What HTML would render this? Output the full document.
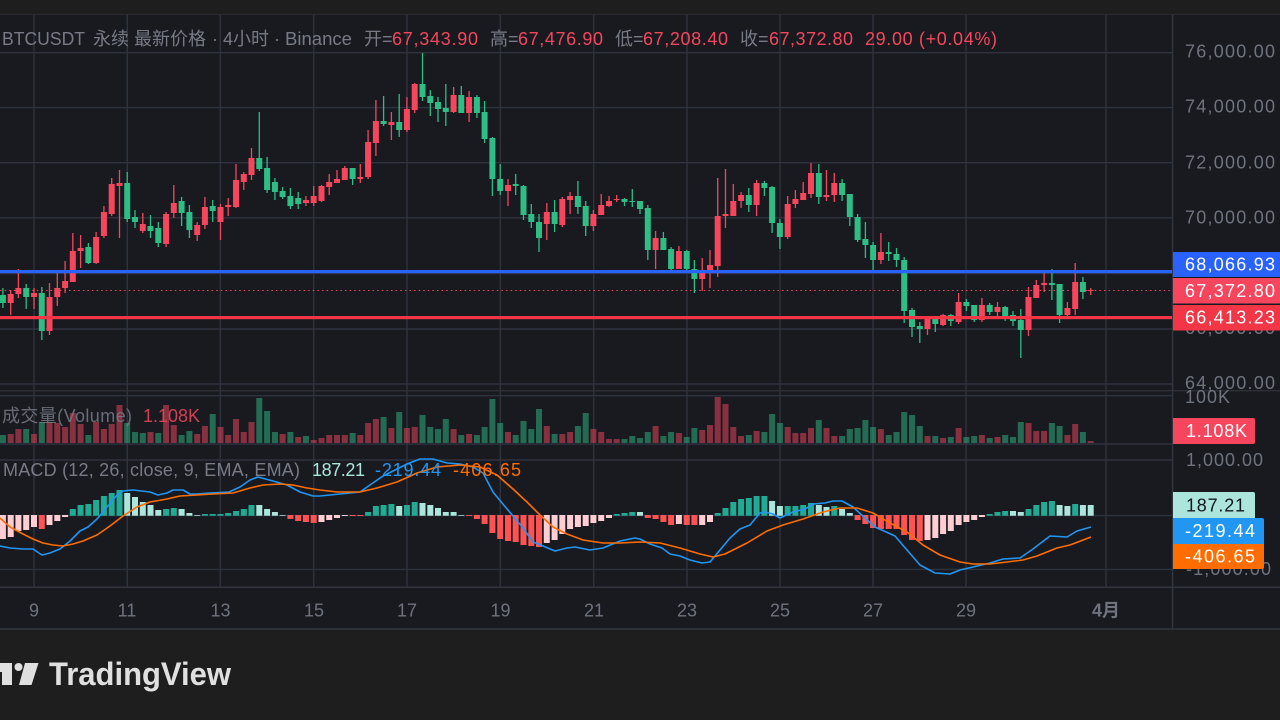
<!DOCTYPE html>
<html lang="zh">
<head>
<meta charset="utf-8">
<title>BTCUSDT Chart</title>
<style>
html,body{margin:0;padding:0;width:1280px;height:720px;overflow:hidden;background:#1e1e1e}
svg{display:block;position:absolute;left:0;top:0}
text{font-family:"Liberation Sans","Noto Sans CJK SC",sans-serif}
</style>
</head>
<body>
<svg width="1280" height="720" viewBox="0 0 1280 720" xmlns="http://www.w3.org/2000/svg">
<rect width="1280" height="720" fill="#1e1e1e"/>
<rect x="0" y="14" width="1280" height="1.2" fill="#2a2a2a"/>
<rect x="0" y="15" width="1280" height="614" fill="#181a20"/>

<!-- grid -->
<path fill="none" stroke="#2f333e" stroke-width="1.4" d="M34 15V587M127.3 15V587M220.3 15V587M313.7 15V587M407 15V587M500.3 15V587M593.7 15V587M687 15V587M780 15V587M873 15V587M966 15V587M1106 15V587M0 52.7H1172M0 107.6H1172M0 162.7H1172M0 217.8H1172M0 273.4H1172M0 329H1172M0 384H1172M0 395.7H1172M0 444H1172M0 460H1172M0 515.6H1172M0 569.4H1172"/>
<path fill="none" stroke="#2d3037" stroke-width="1.4" d="M0 390.7H1280"/>
<path fill="none" stroke="#32363f" stroke-width="1.5" d="M0 587.3H1280M1172.6 15V629M0 629H1280"/>

<!-- volume -->
<g fill="none" stroke-width="6" stroke-opacity=".5">
<path stroke="#2ebd85" d="M2.9 443V435M26.2 443V429M41.8 443V422M88.4 443V435M127.2 443V423M135 443V432M142.8 443V433M158.3 443V433M181.6 443V435M189.4 443V431M212.7 443V414M259.3 443V398M267.1 443V411M274.9 443V432M290.4 443V432M305.9 443V436M352.6 443V433M383.6 443V417M399.2 443V412M422.5 443V415M430.3 443V427M438 443V429M445.8 443V419M461.3 443V435M476.9 443V435M484.6 443V427M492.4 443V399M500.2 443V423M515.7 443V435M523.5 443V421M531.3 443V429M539 443V409M554.6 443V434M577.9 443V426M585.7 443V413M624.5 443V439M632.3 443V436M640 443V438M647.8 443V432M663.4 443V436M671.1 443V432M686.7 443V437M694.4 443V428M748.8 443V435M764.4 443V432M772.1 443V414M779.9 443V423M818.8 443V420M842.1 443V436M849.8 443V429M857.6 443V428M865.4 443V420M873.1 443V427M888.7 443V435M896.5 443V432M904.2 443V412M912 443V415M919.8 443V426M935.3 443V436M950.8 443V437M966.4 443V437M974.2 443V436M989.7 443V438M1005.2 443V435M1013 443V437M1020.8 443V422M1051.9 443V423M1059.6 443V426M1082.9 443V432"/>
<path stroke="#f6465d" d="M10.7 443V434M18.4 443V429M34 443V434M49.5 443V422M57.3 443V423M65.1 443V427M72.8 443V413M80.6 443V424M96.1 443V422M103.9 443V429M111.7 443V424M119.5 443V405M150.5 443V432M166.1 443V405M173.8 443V425M197.2 443V434M204.9 443V426M220.5 443V427M228.2 443V435M236 443V419M243.8 443V432M251.5 443V422M282.6 443V434M298.2 443V437M313.7 443V440M321.5 443V438M329.2 443V435M337 443V435M344.8 443V435M360.3 443V435M368.1 443V423M375.9 443V419M391.4 443V428M406.9 443V428M414.7 443V427M453.6 443V429M469.1 443V434M508 443V432M546.8 443V426M562.3 443V434M570.1 443V432M593.4 443V429M601.2 443V432M609 443V439M616.7 443V439M655.6 443V426M678.9 443V433M702.2 443V430M710 443V425M717.7 443V397M725.5 443V404M733.3 443V427M741.1 443V436M756.6 443V431M787.7 443V427M795.4 443V433M803.2 443V433M811 443V428M826.5 443V428M834.3 443V436M880.9 443V429M927.5 443V436M943.1 443V438M958.6 443V428M981.9 443V435M997.5 443V437M1028.5 443V423M1036.3 443V431M1044.1 443V431M1067.4 443V435M1075.2 443V424M1090.7 443V441"/>
</g>

<!-- histogram -->
<g fill="none" stroke-width="6">
<path stroke="#22ab94" d="M72.8 515.8V509M80.6 515.8V505M88.4 515.8V504M96.1 515.8V500M103.9 515.8V496M111.7 515.8V493M119.5 515.8V490M166.1 515.8V509M173.8 515.8V508M204.9 515.8V514M212.7 515.8V514M220.5 515.8V514M228.2 515.8V513M236 515.8V511M243.8 515.8V509M251.5 515.8V505M368.1 515.8V512M375.9 515.8V506M383.6 515.8V505M391.4 515.8V504M406.9 515.8V505M414.7 515.8V502M616.7 515.8V514M624.5 515.8V513M632.3 515.8V512M717.7 515.8V513M725.5 515.8V508M733.3 515.8V502M741.1 515.8V499M748.8 515.8V498M756.6 515.8V496M764.4 515.8V496M787.7 515.8V506M795.4 515.8V506M803.2 515.8V505M811 515.8V503M834.3 515.8V506M989.7 515.8V514M997.5 515.8V512M1005.2 515.8V511M1028.5 515.8V509M1036.3 515.8V505M1044.1 515.8V502M1051.9 515.8V501M1075.2 515.8V504"/>
<path stroke="#ace5dc" d="M127.2 515.8V493M135 515.8V497M142.8 515.8V502M150.5 515.8V505M158.3 515.8V510M181.6 515.8V509M189.4 515.8V513M197.2 515.8V515M259.3 515.8V505M267.1 515.8V509M274.9 515.8V512M282.6 515.8V515M399.2 515.8V506M422.5 515.8V503M430.3 515.8V505M438 515.8V508M445.8 515.8V512M453.6 515.8V512M461.3 515.8V515M640 515.8V512M772.1 515.8V501M779.9 515.8V506M818.8 515.8V505M826.5 515.8V507M842.1 515.8V509M849.8 515.8V513M1013 515.8V511M1020.8 515.8V512M1059.6 515.8V505M1067.4 515.8V506M1082.9 515.8V505M1090.7 515.8V505"/>
<path stroke="#ff5252" d="M41.8 515V529M290.4 515V519M298.2 515V521M305.9 515V522M313.7 515V523M352.6 515V516M360.3 515V516M469.1 515V516M476.9 515V519M484.6 515V524M492.4 515V533M500.2 515V539M508 515V541M515.7 515V542M523.5 515V545M531.3 515V546M539 515V547M647.8 515V518M655.6 515V519M663.4 515V522M671.1 515V525M686.7 515V525M694.4 515V525M857.6 515V520M865.4 515V524M873.1 515V528M880.9 515V529M888.7 515V529M896.5 515V529M904.2 515V535M912 515V540M919.8 515V541"/>
<path stroke="#ffcdd2" d="M2.9 515V539M10.7 515V537M18.4 515V531M26.2 515V530M34 515V527M49.5 515V525M57.3 515V521M65.1 515V517M321.5 515V522M329.2 515V520M337 515V518M344.8 515V516M546.8 515V543M554.6 515V540M562.3 515V534M570.1 515V529M577.9 515V527M585.7 515V526M593.4 515V523M601.2 515V521M609 515V518M678.9 515V524M702.2 515V525M710 515V522M927.5 515V540M935.3 515V538M943.1 515V534M950.8 515V531M958.6 515V525M966.4 515V522M974.2 515V520M981.9 515V517"/>
</g>

<!-- MACD lines -->
<polyline fill="none" stroke="#2196f3" stroke-width="1.6" stroke-linejoin="round" points="0,546 10,548 23,549 33,549 42,555 50,553 60,549 70,541 80,531 88,527 97,519 107,507 117,495 123,491 133,490 150,492 158,495 167,493 173,490 183,490 190,494 197,494 210,493 229,492 240,487 250,480 258,477 273,481 287,485 300,492 313,496 320,496 340,494 360,492 370,485 383,476 397,469 407,464 420,459 433,459 447,463 460,464 473,467 483,473 493,492 502,503 513,516 523,528 533,542 543,546 555,551 567,548 575,547 590,550 603,548 620,541 635,538 640,539 650,544 662,548 670,554 680,556 690,560 702,563 710,562 720,550 730,538 740,529 750,525 760,513 765,512 773,514 780,518 793,512 805,509 813,504 825,503 833,501 842,501 853,507 865,518 875,527 895,536 907,550 920,565 935,573 950,574 960,570 973,567 990,563 1003,559 1020,558 1033,549 1050,536 1067,537 1077,531 1091,527"/>
<polyline fill="none" stroke="#ff6d00" stroke-width="1.6" stroke-linejoin="round" points="0,518 10,527 23,534 33,539 43,543 53,545 63,546 73,544 83,541 97,535 110,526 123,516 137,507 150,502 167,499 180,496 197,495 213,494 233,493 250,488 263,485 280,484 293,485 307,488 320,490 337,492 360,492 377,488 397,482 417,473 437,467 460,465 480,467 497,475 513,489 527,502 540,515 553,527 567,534 583,540 603,543 620,543 640,542 660,543 680,548 700,554 713,557 725,554 747,543 767,531 783,525 803,519 823,512 840,508 857,508 873,513 890,523 907,532 923,545 940,555 960,562 973,564 990,564 1007,562 1023,560 1037,556 1057,548 1070,545 1091,537"/>

<!-- price lines behind candles -->
<line x1="0" x2="1172" y1="290.5" y2="290.5" stroke="#f6465d" stroke-width="1.1" stroke-dasharray="1.5 3.1"/>

<!-- candles: wicks -->
<g fill="none" stroke-width="1.3">
<path stroke="#2ebd85" d="M2.9 288V308M26.2 284V309M41.8 287V340M88.4 243V264M127.2 172V222M135 210V228M150.5 215V238M158.3 222V247M181.6 197V226M189.4 205V238M212.7 200V222M259.3 112V171M267.1 157V193M274.9 178V200M282.6 187V199M290.4 188V209M298.2 192V209M352.6 168V185M383.6 96V126M399.2 94V137M422.5 53V101M430.3 90V116M438 97V122M445.8 84V126M461.3 86V113M476.9 95V118M484.6 101V143M492.4 137V196M500.2 164V195M515.7 174V195M523.5 185V220M531.3 204V228M539 214V252M554.6 200V232M577.9 181V214M585.7 201V236M624.5 198V206M632.3 189V207M640 201V214M647.8 205V260M663.4 232V250M671.1 247V272M686.7 250V270M694.4 260V293M748.8 188V212M764.4 181V196M772.1 186V233M779.9 219V249M818.8 164V204M842.1 179V201M849.8 194V226M857.6 214V242M865.4 222V258M873.1 242V270M888.7 242V261M896.5 248V267M904.2 257V323M912 308V337M919.8 322V343M935.3 316V332M950.8 314V326M966.4 299V311M974.2 305V322M989.7 303V315M1005.2 306V321M1013 311V326M1020.8 309V358M1051.9 269V300M1059.6 284V323M1082.9 277V299"/>
<path stroke="#f6465d" d="M10.7 290V315M18.4 269V298M34 288V309M49.5 283V335M57.3 272V306M65.1 261V293M72.8 233V282M80.6 235V268M96.1 232V264M103.9 206V238M111.7 178V216M119.5 170V238M142.8 213V233M166.1 212V247M173.8 185V218M197.2 222V241M204.9 197V229M220.5 204V240M228.2 198V216M236 164V208M243.8 172V190M251.5 148V180M305.9 196V206M313.7 186V206M321.5 185V202M329.2 174V195M337 170V183M344.8 166V180M360.3 164V183M368.1 130V179M375.9 100V156M391.4 112V140M406.9 97V132M414.7 83V113M453.6 87V113M469.1 91V122M508 179V206M546.8 203V240M562.3 197V227M570.1 192V214M593.4 210V231M601.2 194V215M609 196V207M616.7 195V202M655.6 231V269M678.9 246V269M702.2 258V291M710 250V288M717.7 178V277M725.5 169V228M733.3 184V216M741.1 192V208M756.6 180V216M787.7 196V239M795.4 190V208M803.2 182V200M811 163V198M826.5 170V201M834.3 173V202M880.9 233V264M927.5 317V335M943.1 314V326M958.6 293V324M981.9 298V322M997.5 302V317M1028.5 287V336M1036.3 280V298M1044.1 273V292M1067.4 302V317M1075.2 263V315M1090.7 288V295"/>
</g>
<!-- candles: bodies -->
<g fill="none" stroke-width="6">
<path stroke="#2ebd85" d="M2.9 295V303M26.2 288V297M41.8 293V331M88.4 247V263M127.2 183V219M135 217V222M150.5 226V231M158.3 228V243M181.6 201V213M189.4 212V230M212.7 206V211M259.3 158V169M267.1 168V190M274.9 182V192M282.6 191V197M290.4 196V206M298.2 198V204M352.6 168V179M383.6 121V124M399.2 122V130M422.5 84V97M430.3 96V103M438 102V109M445.8 108V112M461.3 95V113M476.9 97V113M484.6 112V139M492.4 138V179M500.2 179V191M515.7 184V186M523.5 186V215M531.3 214V222M539 222V238M554.6 212V224M577.9 196V207M585.7 206V226M624.5 199V202M632.3 201V202M640 201V209M647.8 208V250M663.4 238V250M671.1 249V269M686.7 251V269M694.4 269V279M748.8 195V205M764.4 183V188M772.1 187V223M779.9 223V237M818.8 173V197M842.1 183V195M849.8 194V217M857.6 217V240M865.4 239V245M873.1 245V260M888.7 252V254M896.5 254V260M904.2 260V311M912 310V327M919.8 326V329M935.3 318V324M950.8 315V321M966.4 302V306M974.2 305V320M989.7 305V312M1005.2 307V316M1013 315V321M1020.8 320V330M1051.9 283V285M1059.6 284V315M1082.9 282V292"/>
<path stroke="#f6465d" d="M10.7 294V303M18.4 288V294M34 293V297M49.5 297V331M57.3 288V297M65.1 281V288M72.8 251V282M80.6 248V251M96.1 237V263M103.9 212V236M111.7 184V214M119.5 183V186M142.8 224V231M166.1 214V244M173.8 203V213M197.2 225V235M204.9 207V225M220.5 207V222M228.2 205V207M236 180V207M243.8 174V182M251.5 158V175M305.9 200V203M313.7 196V203M321.5 186V201M329.2 182V187M337 179V183M344.8 168V180M360.3 177V179M368.1 142V177M375.9 121V143M391.4 122V125M406.9 109V130M414.7 84V110M453.6 95V112M469.1 97V113M508 185V191M546.8 212V224M562.3 199V225M570.1 196V200M593.4 214V226M601.2 205V215M609 201V206M616.7 199V200M655.6 238V250M678.9 251V269M702.2 272V279M710 265V273M717.7 216V266M725.5 214V216M733.3 201V216M741.1 195V201M756.6 183V205M787.7 204V237M795.4 199V204M803.2 193V200M811 173V194M826.5 195V197M834.3 183V195M880.9 252V260M927.5 319V329M943.1 315V325M958.6 302V322M981.9 305V320M997.5 307V312M1028.5 297V330M1036.3 285V298M1044.1 283V285M1067.4 308V315M1075.2 282V309M1090.7 290V291"/>
</g>

<!-- price lines -->
<rect x="0" y="270" width="1172" height="3.2" fill="#2962ff"/>
<rect x="0" y="316" width="1172" height="3.2" fill="#f23645"/>

<!-- legend -->
<g font-size="18" fill="#787b86">
<text x="2" y="45" textLength="83" lengthAdjust="spacingAndGlyphs">BTCUSDT</text>
<text x="93" y="45">永续</text>
<text x="134" y="45">最新价格</text>
<text x="212" y="45">·</text>
<text x="223" y="45">4小时</text>
<text x="274" y="45">·</text>
<text x="285" y="45" textLength="67" lengthAdjust="spacingAndGlyphs">Binance</text>
<text x="364" y="45">开=</text>
<text x="490" y="45">高=</text>
<text x="615" y="45">低=</text>
<text x="740" y="45">收=</text>
</g>
<g font-size="18" fill="#f6465d">
<text x="392" y="45" textLength="86" lengthAdjust="spacing">67,343.90</text>
<text x="518" y="45" textLength="85" lengthAdjust="spacing">67,476.90</text>
<text x="643" y="45" textLength="85" lengthAdjust="spacing">67,208.40</text>
<text x="769" y="45" textLength="84" lengthAdjust="spacing">67,372.80</text>
<text x="865" y="45" textLength="132" lengthAdjust="spacing">29.00 (+0.04%)</text>
</g>
<text x="2" y="422" font-size="18" fill="#787b86" fill-opacity=".85" textLength="130" lengthAdjust="spacing">成交量(Volume)</text>
<text x="143" y="422" font-size="18" fill="#f6465d" fill-opacity=".85" textLength="57" lengthAdjust="spacing">1.108K</text>
<text x="3" y="476" font-size="18" fill="#787b86" textLength="297" lengthAdjust="spacing">MACD (12, 26, close, 9, EMA, EMA)</text>
<text x="312" y="476" font-size="18" fill="#ace5dc" textLength="53" lengthAdjust="spacing">187.21</text>
<text x="375" y="476" font-size="18" fill="#2196f3" textLength="66" lengthAdjust="spacing">-219.44</text>
<text x="453" y="476" font-size="18" fill="#ff6d00" textLength="68" lengthAdjust="spacing">-406.65</text>

<!-- price axis labels -->
<g font-size="18" fill="#6f737e">
<text x="1185" y="57.5" textLength="90" lengthAdjust="spacing">76,000.00</text>
<text x="1185" y="112.5" textLength="90" lengthAdjust="spacing">74,000.00</text>
<text x="1185" y="168.5" textLength="90" lengthAdjust="spacing">72,000.00</text>
<text x="1185" y="223.5" textLength="90" lengthAdjust="spacing">70,000.00</text>
<text x="1185" y="334" textLength="90" lengthAdjust="spacing">66,000.00</text>
<text x="1185" y="389" textLength="90" lengthAdjust="spacing">64,000.00</text>
<text x="1185" y="403" textLength="45" lengthAdjust="spacing">100K</text>
<text x="1186" y="466" textLength="77" lengthAdjust="spacing">1,000.00</text>
<text x="1186" y="575" textLength="85" lengthAdjust="spacing">-1,000.00</text>
</g>

<!-- price tags -->
<rect x="1173" y="252" width="107" height="25" fill="#2962ff"/>
<text x="1185" y="270.5" font-size="18" fill="#fff" textLength="90" lengthAdjust="spacing">68,066.93</text>
<rect x="1173" y="278" width="107" height="25.5" fill="#f6465d"/>
<text x="1185" y="297" font-size="18" fill="#fff" textLength="90" lengthAdjust="spacing">67,372.80</text>
<rect x="1173" y="305" width="107" height="25.5" fill="#f23645"/>
<text x="1185" y="323.5" font-size="18" fill="#fff" textLength="90" lengthAdjust="spacing">66,413.23</text>

<path d="M1173 418H1253a2 2 0 0 1 2 2V442a2 2 0 0 1 -2 2H1173Z" fill="#f6465d"/>
<text x="1186" y="437" font-size="18" fill="#fff" textLength="61" lengthAdjust="spacing">1.108K</text>

<path d="M1173 492H1253a2 2 0 0 1 2 2V518H1173Z" fill="#ace5dc"/>
<text x="1186" y="511.5" font-size="18" fill="#131722" textLength="59" lengthAdjust="spacing">187.21</text>
<path d="M1173 518H1262a2 2 0 0 1 2 2V544H1173Z" fill="#2196f3"/>
<text x="1185" y="537" font-size="18" fill="#fff" textLength="70" lengthAdjust="spacing">-219.44</text>
<path d="M1173 544H1264V567a2 2 0 0 1 -2 2H1173Z" fill="#ff6d00"/>
<text x="1185" y="562.5" font-size="18" fill="#fff" textLength="70" lengthAdjust="spacing">-406.65</text>

<!-- time axis -->
<g font-size="18" fill="#6f737e" text-anchor="middle">
<text x="34" y="616.5">9</text>
<text x="127" y="616.5">11</text>
<text x="220.5" y="616.5">13</text>
<text x="314" y="616.5">15</text>
<text x="407" y="616.5">17</text>
<text x="500.5" y="616.5">19</text>
<text x="594" y="616.5">21</text>
<text x="687" y="616.5">23</text>
<text x="780" y="616.5">25</text>
<text x="873" y="616.5">27</text>
<text x="966" y="616.5">29</text>
<text x="1106" y="616.5" font-weight="bold">4月</text>
</g>

<!-- logo -->
<g fill="#e0e0e0">
<path d="M0 663H12V685H2V672H0Z"/>
<circle cx="18.5" cy="667" r="4"/>
<path d="M25 663H38.5L31.5 685H19Z"/>
<text x="49" y="685" font-size="32" font-weight="bold" textLength="182" lengthAdjust="spacingAndGlyphs">TradingView</text>
</g>
</svg>
</body>
</html>
